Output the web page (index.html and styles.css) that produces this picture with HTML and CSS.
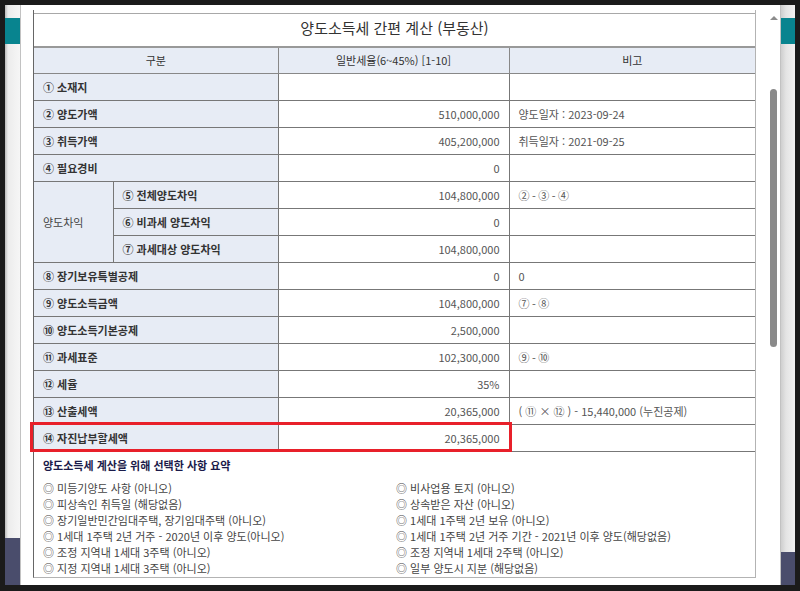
FILE: index.html
```html
<!DOCTYPE html>
<html lang="ko">
<head>
<meta charset="utf-8">
<title>양도소득세 간편 계산</title>
<link rel="stylesheet" href="styles.css">
</head>
<body>
<div class="screen">
  <div class="side side-left">
    <div class="band-top"></div>
    <div class="band-teal"></div>
    <div class="band-mid"></div>
    <div class="band-navy"></div>
  </div>
  <div class="dialog">
    <div class="content">
      <div class="sheet">
        <table class="calc">
          <colgroup>
            <col class="c-a"><col class="c-b"><col class="c-c"><col class="c-d">
          </colgroup>
          <tr class="title-row"><td colspan="4">양도소득세 간편 계산 (부동산)</td></tr>
          <tr class="head-row"><th colspan="2">구분</th><th>일반세율(6~45%) [1-10]</th><th>비고</th></tr>
          <tr><td colspan="2" class="lbl">① 소재지</td><td class="num"></td><td class="note"></td></tr>
          <tr><td colspan="2" class="lbl">② 양도가액</td><td class="num">510,000,000</td><td class="note">양도일자 : 2023-09-24</td></tr>
          <tr><td colspan="2" class="lbl">③ 취득가액</td><td class="num">405,200,000</td><td class="note">취득일자 : 2021-09-25</td></tr>
          <tr><td colspan="2" class="lbl">④ 필요경비</td><td class="num">0</td><td class="note"></td></tr>
          <tr><td rowspan="3" class="grp">양도차익</td><td class="lbl">⑤ 전체양도차익</td><td class="num">104,800,000</td><td class="note">② - ③ - ④</td></tr>
          <tr><td class="lbl">⑥ 비과세 양도차익</td><td class="num">0</td><td class="note"></td></tr>
          <tr><td class="lbl">⑦ 과세대상 양도차익</td><td class="num">104,800,000</td><td class="note"></td></tr>
          <tr><td colspan="2" class="lbl">⑧ 장기보유특별공제</td><td class="num">0</td><td class="note">0</td></tr>
          <tr><td colspan="2" class="lbl">⑨ 양도소득금액</td><td class="num">104,800,000</td><td class="note">⑦ - ⑧</td></tr>
          <tr><td colspan="2" class="lbl">⑩ 양도소득기본공제</td><td class="num">2,500,000</td><td class="note"></td></tr>
          <tr><td colspan="2" class="lbl">⑪ 과세표준</td><td class="num">102,300,000</td><td class="note">⑨ - ⑩</td></tr>
          <tr><td colspan="2" class="lbl">⑫ 세율</td><td class="num">35%</td><td class="note"></td></tr>
          <tr><td colspan="2" class="lbl">⑬ 산출세액</td><td class="num">20,365,000</td><td class="note">( ⑪ × ⑫ ) - 15,440,000 (누진공제)</td></tr>
          <tr><td colspan="2" class="lbl">⑭ 자진납부할세액</td><td class="num">20,365,000</td><td class="note"></td></tr>
        </table>
        <div class="summary">
          <div class="summary-title">양도소득세 계산을 위해 선택한 사항 요약</div>
          <ul class="summary-list">
            <li>◎ 미등기양도 사항 (아니오)</li>
            <li>◎ 비사업용 토지 (아니오)</li>
            <li>◎ 피상속인 취득일 (해당없음)</li>
            <li>◎ 상속받은 자산 (아니오)</li>
            <li>◎ 장기일반민간임대주택, 장기임대주택 (아니오)</li>
            <li>◎ 1세대 1주택 2년 보유 (아니오)</li>
            <li>◎ 1세대 1주택 2년 거주 - 2020년 이후 양도(아니오)</li>
            <li>◎ 1세대 1주택 2년 거주 기간 - 2021년 이후 양도(해당없음)</li>
            <li>◎ 조정 지역내 1세대 3주택 (아니오)</li>
            <li>◎ 조정 지역내 1세대 2주택 (아니오)</li>
            <li>◎ 지정 지역내 1세대 3주택 (아니오)</li>
            <li>◎ 일부 양도시 지분 (해당없음)</li>
          </ul>
        </div>
        <div class="highlight"></div>
      </div>
    </div>
    <div class="scrollbar">
      <div class="arrow"></div>
      <div class="thumb"></div>
    </div>
  </div>
  <div class="side side-right">
    <div class="band-top"></div>
    <div class="band-teal"></div>
    <div class="band-mid"></div>
    <div class="band-navy"></div>
  </div>
</div>
</body>
</html>
```

FILE: styles.css
```css
html, body {
  margin: 0;
  padding: 0;
  background: #1b1b1b;
  font-family: "Noto Sans CJK KR", "Noto Sans", sans-serif;
}

.screen {
  display: grid;
  grid-template-columns: 15px 761px 14px;
  width: 790px;
  height: 580px;
  margin: 5px 0 0 5px;
}

.side {
  display: flex;
  flex-direction: column;
}
.side-left {
  background: linear-gradient(to right, #b9b9b9 0, #ececec 3px, #f6f6f6 100%);
}
.side-right {
  background: linear-gradient(to right, #cfcfcf 0, #e4e4e4 5px, #f2f2f2 100%);
}
.band-top { height: 13px; }
.band-teal { height: 26px; background: #08848f; }
.band-mid { flex: 1; }
.side-left .band-navy { height: 47px; background: #4a4d6c; }
.side-right .band-navy { height: 33px; background: #4a4d6c; }

.dialog {
  display: flex;
  background: #fff;
  border-left: 1px solid #c2c2c2;
  border-right: 1px solid #c2c2c2;
  box-sizing: border-box;
}

.content {
  flex: none;
  width: 735px;
  padding: 5px 0 0 12px;
  box-sizing: border-box;
}

.sheet {
  position: relative;
  width: 723px;
  padding-top: 3px;
  border-left: 1px solid #666;
  border-right: 1px solid #b3b3b3;
  border-bottom: 1px solid #b3b3b3;
  box-sizing: border-box;
}

.calc {
  width: 721px;
  border-collapse: collapse;
  table-layout: fixed;
  font-size: 11px;
  color: #333;
}
.c-a { width: 79px; }
.c-b { width: 165px; }
.c-c { width: 231px; }
.c-d { width: 246px; }

.calc td, .calc th {
  border: 1px solid #777;
  height: 27px;
  padding: 0;
  box-sizing: border-box;
  line-height: 14px;
}
.calc tr > :first-child { border-left: none; }
.calc tr > :last-child { border-right: none; }

.title-row td {
  height: 33px;
  text-align: center;
  font-size: 15px;
  color: #333;
  padding-bottom: 4px;
  border-top: 1px solid #a8a8a8;
  border-bottom: 2px solid #999;
}

.head-row th {
  background: #e7ecf5;
  font-weight: normal;
  color: #333;
  text-align: center;
  border-color: #888;
}

.lbl {
  background: #e7ecf5;
  font-weight: bold;
  color: #333;
  padding-left: 9px !important;
  text-align: left;
}
.grp {
  background: #e7ecf5;
  color: #444;
  padding-left: 9px !important;
}
.num {
  text-align: right;
  padding-right: 9px !important;
  color: #555;
}
.note {
  padding-left: 9px !important;
  color: #555;
}

.summary {
  padding: 5px 0 1px 9px;
}
.summary-title {
  font-size: 11px;
  line-height: 16px;
  font-weight: bold;
  color: #1b1b4a;
  margin-bottom: 7px;
}
.summary-list {
  list-style: none;
  margin: 0;
  padding: 0;
  display: grid;
  grid-template-columns: 353px 1fr;
  font-size: 11px;
  line-height: 16px;
  color: #444;
}

.highlight {
  position: absolute;
  left: -4px;
  top: 412px;
  width: 482px;
  height: 30px;
  border: 3px solid #e8202a;
  box-sizing: border-box;
}

.scrollbar {
  flex: 1;
  display: flex;
  flex-direction: column;
  padding-left: 14px;
}
.arrow {
  margin-top: 11px;
  width: 0;
  height: 0;
  border-left: 4px solid transparent;
  border-right: 4px solid transparent;
  border-bottom: 4px solid #8c8c8c;
}
.thumb {
  margin-top: 69px;
  width: 7px;
  height: 258px;
  border-radius: 4px;
  background: #8a8a8a;
}
```
